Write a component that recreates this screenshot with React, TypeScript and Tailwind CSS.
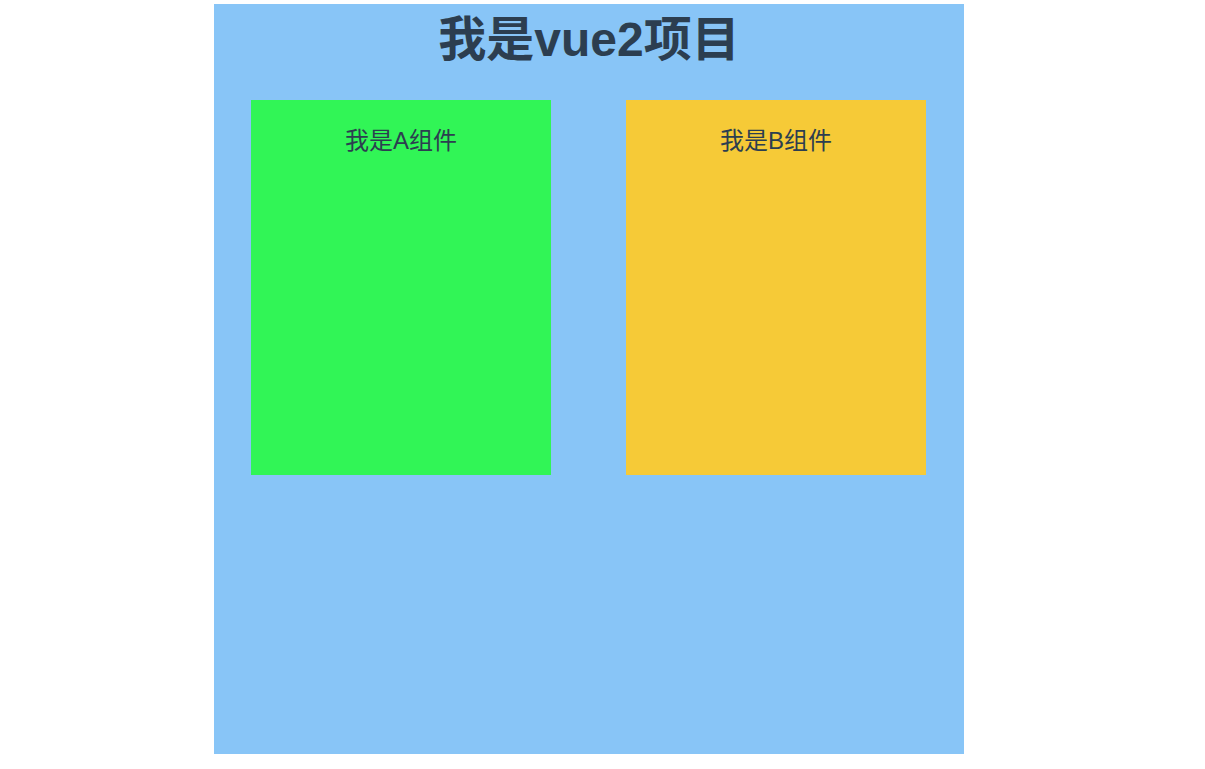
export default function App() {
  const font = { fontFamily: '"Liberation Sans", Arial, "Noto Sans CJK SC", sans-serif' };
  return (
    <div className="min-h-screen bg-white" style={font}>
      <div className="ml-[214px] pt-[4px]">
        <div className="w-[750px] h-[750px] bg-[#88c5f7] text-[#2c3e50]">
          <h1 className="h-[72px] text-center text-[48px] leading-[72px] font-bold">我是vue2项目</h1>
          <div className="mt-[24px] flex gap-[75px] px-[37px]">
            <div className="w-[300px] h-[375px] bg-[#31f556] pt-[23px] text-center text-[24px] leading-[36px]">
              我是A组件
            </div>
            <div className="w-[300px] h-[375px] bg-[#f6ca37] pt-[23px] text-center text-[24px] leading-[36px]">
              我是B组件
            </div>
          </div>
        </div>
      </div>
    </div>
  );
}
